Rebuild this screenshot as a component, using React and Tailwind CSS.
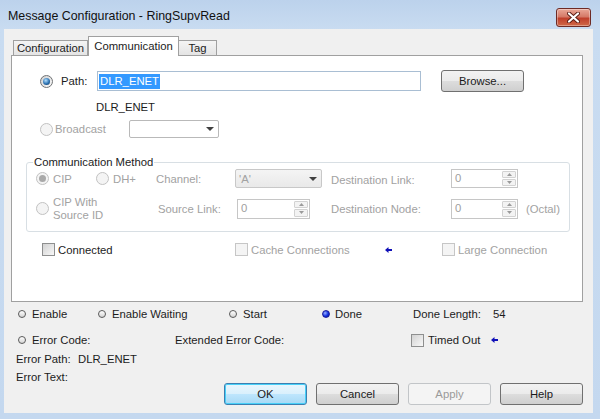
import clsx from 'clsx'

const dis = 'text-[#a2a2a2]'

function Radio({ checked, disabled }) {
  return (
    <span
      className={clsx(
        'flex h-[13px] w-[13px] shrink-0 items-center justify-center rounded-full border',
        disabled
          ? 'border-[#c2c2c2] bg-[#f4f4f4]'
          : 'border-[#707274] bg-[linear-gradient(135deg,#cfcfcf,#fbfbfb)]'
      )}
    >
      {checked && (
        <span
          className={clsx(
            'h-[7px] w-[7px] rounded-full',
            disabled
              ? 'bg-[#a9a9a9]'
              : 'bg-[radial-gradient(circle_at_40%_35%,#b3e0ff,#2c72b2_55%,#0d2f52)]'
          )}
        />
      )}
    </span>
  )
}

function Check({ disabled }) {
  return (
    <span
      className={clsx(
        'block h-[13px] w-[13px] shrink-0 border',
        disabled
          ? 'border-[#c6c6c6] bg-[#f4f4f4]'
          : 'border-[#8e8f8f] bg-[linear-gradient(135deg,#d2d2d2,#f8f8f8)]'
      )}
    />
  )
}

function Dot({ on }) {
  return (
    <span
      className={clsx(
        'block h-[8px] w-[8px] shrink-0 rounded-full border',
        on
          ? 'border-[#1a1a9a] bg-[radial-gradient(circle_at_35%_35%,#9ab0ff,#1030e0_55%,#0a1a90)]'
          : 'border-[#5a5a5a] bg-[linear-gradient(#ffffff,#d4d4d4)]'
      )}
    />
  )
}

function Arrow() {
  return (
    <svg width="7" height="6" viewBox="0 0 7 6" className="shrink-0">
      <path d="M0 3 L3.5 0 L3.5 2 L7 2 L7 4 L3.5 4 L3.5 6 Z" fill="#1010b8" />
    </svg>
  )
}

function Tri({ color = '#9a9a9a', up, big }) {
  const w = big ? 8 : 5
  const h = big ? 4 : 3
  return (
    <svg width={w} height={h} viewBox={`0 0 ${w} ${h}`}>
      <path d={up ? `M0 ${h} L${w / 2} 0 L${w} ${h} Z` : `M0 0 L${w} 0 L${w / 2} ${h} Z`} fill={color} />
    </svg>
  )
}

function Spin({ className }) {
  return (
    <div className={clsx('flex shrink-0 border border-[#c6c6c6] bg-white', className)}>
      <span className="flex-1 pl-[3px] leading-[17px] text-[#a0a0a0]">0</span>
      <div className="flex w-[16px] flex-col gap-px p-px">
        <span className="flex flex-1 items-center justify-center rounded-[1px] border border-[#d2d2d2] bg-[#f3f3f3]">
          <Tri up />
        </span>
        <span className="flex flex-1 items-center justify-center rounded-[1px] border border-[#d2d2d2] bg-[#f3f3f3]">
          <Tri />
        </span>
      </div>
    </div>
  )
}

function Btn({ children, variant }) {
  return (
    <div
      className={clsx(
        'flex h-[22px] w-[83px] items-center justify-center rounded-[3px] border',
        variant === 'default' &&
          'border-[#3c7fb1] bg-[linear-gradient(#eaf6fd,#d9f0fc_50%,#bee6fd_50%,#a7d9f5)] text-[#1a1a1a] shadow-[inset_0_0_0_1px_#48d0f8]',
        variant === 'disabled' && 'border-[#c2c5c8] bg-[#f4f4f4] text-[#9a9a9a]',
        !variant &&
          'border-[#707070] bg-[linear-gradient(#f2f2f2,#ebebeb_50%,#dddddd_50%,#cfcfcf)] text-[#1a1a1a]'
      )}
    >
      {children}
    </div>
  )
}

export default function App() {
  return (
    <div
      className="flex h-[419px] w-[600px] flex-col bg-[linear-gradient(#bcd2ec,#c9dcf1_30px,#c4d8ef)] text-[11.3px] leading-[14px] text-[#1c1c1c]"
      style={{ fontFamily: '"Liberation Sans", Arial, sans-serif' }}
    >
      {/* title bar */}
      <div className="flex h-[29px] shrink-0 items-start justify-between pl-[8px] pr-[9px]">
        <span className="mt-[9px] text-[12.4px] leading-[14px] text-[#111]">
          Message Configuration - RingSupvRead
        </span>
        <div className="mt-[8px] flex h-[19px] w-[35px] items-center justify-center rounded-[3px] border border-[#6e2b25] bg-[linear-gradient(#eaa898,#d57a68_45%,#c0402c_55%,#d06a48)] shadow-[inset_0_0_0_1px_rgba(255,255,255,0.35)]">
          <svg width="13" height="11" viewBox="0 0 13 11">
            <path d="M2 1.5 L11 9.5 M11 1.5 L2 9.5" stroke="#5a1c14" strokeWidth="4" strokeLinecap="round" />
            <path d="M2 1.5 L11 9.5 M11 1.5 L2 9.5" stroke="#ffffff" strokeWidth="2.2" strokeLinecap="round" />
          </svg>
        </div>
      </div>

      {/* body */}
      <div className="ml-[4px] mr-[7px] mb-[6px] flex flex-1 flex-col bg-[#f0f0f0] pt-[7px]">
        {/* tabs */}
        <div className="ml-[9px] flex h-[19px] items-end">
          <div className="flex h-[15px] w-[75px] items-center justify-center border border-b-0 border-[#a0a0a0] bg-[linear-gradient(#f4f4f4,#e4e4e4)]">
            Configuration
          </div>
          <div className="relative z-10 -mb-px flex h-[20px] w-[91px] items-center justify-center border border-b-0 border-[#a0a0a0] bg-white pb-[2px]">
            Communication
          </div>
          <div className="flex h-[15px] w-[38px] items-center justify-center border border-b-0 border-l-0 border-[#a0a0a0] bg-[linear-gradient(#f4f4f4,#e4e4e4)]">
            Tag
          </div>
        </div>

        {/* tab panel */}
        <div className="ml-[7px] flex h-[247px] w-[572px] flex-col border border-[#a0a0a0] bg-white">
          {/* path row */}
          <div className="mt-[14px] flex h-[22px] items-center">
            <div className="ml-[28px]">
              <Radio checked />
            </div>
            <span className="ml-[8px] w-[36px]">Path:</span>
            <div className="flex h-[20px] w-[324px] items-center border border-[#a9bed3] bg-white pl-[1px]">
              <span className="bg-[#3399ff] px-[1px] leading-[15px] text-white">DLR_ENET</span>
            </div>
            <div className="ml-[20px]">
              <Btn>Browse...</Btn>
            </div>
          </div>

          <div className="mt-[8px] ml-[84px]">DLR_ENET</div>

          {/* broadcast row */}
          <div className="mt-[6px] flex h-[18px] items-center">
            <div className="ml-[28px]">
              <Radio disabled />
            </div>
            <span className={clsx('ml-[2px] w-[74px]', dis)}>Broadcast</span>
            <div className="flex h-[18px] w-[90px] items-center justify-end rounded-[2px] border border-[#b9b9b9] bg-white pr-[4px]">
              <Tri color="#404040" big />
            </div>
          </div>

          {/* communication method group */}
          <div className="relative ml-[14px] mt-[24px] flex h-[70px] w-[544px] flex-col rounded-[3px] border border-[#d8dfe4] pl-[9px]">
            <span className="absolute -top-[8px] left-[6px] bg-white px-[1px]">Communication Method</span>

            <div className={clsx('mt-[6px] flex h-[19px] items-center', dis)}>
              <div className="flex w-[60px] items-center gap-[4px]">
                <Radio checked disabled />
                <span>CIP</span>
              </div>
              <div className="flex w-[60px] items-center gap-[4px]">
                <Radio disabled />
                <span>DH+</span>
              </div>
              <span className="w-[79px]">Channel:</span>
              <div className="flex h-[19px] w-[87px] items-center justify-between rounded-[2px] border border-[#c8c8c8] bg-[linear-gradient(#f4f4f4,#e9e9e9)] pl-[3px] pr-[4px]">
                <span>'A'</span>
                <Tri color="#404040" big />
              </div>
              <span className="ml-[9px] mt-[3px] w-[120px]">Destination Link:</span>
              <Spin className="h-[19px] w-[67px]" />
            </div>

            <div className={clsx('mt-[10px] flex h-[21px] items-center', dis)}>
              <div className="flex w-[122px] items-center gap-[4px]">
                <Radio disabled />
                <span className="leading-[13px]">
                  CIP With
                  <br />
                  Source ID
                </span>
              </div>
              <span className="w-[79px]">Source Link:</span>
              <Spin className="h-[20px] w-[73px]" />
              <span className="ml-[21px] w-[120px]">Destination Node:</span>
              <Spin className="h-[20px] w-[67px]" />
              <span className="ml-[8px]">(Octal)</span>
            </div>
          </div>

          {/* checkboxes */}
          <div className="mt-[11px] flex h-[13px] items-center">
            <div className="ml-[30px] flex w-[193px] items-center gap-[3px]">
              <Check />
              <span>Connected</span>
            </div>
            <div className={clsx('flex w-[150px] items-center gap-[3px]', dis)}>
              <Check disabled />
              <span>Cache Connections</span>
            </div>
            <Arrow />
            <div className={clsx('ml-[50px] flex items-center gap-[3px]', dis)}>
              <Check disabled />
              <span>Large Connection</span>
            </div>
          </div>
        </div>

        {/* status rows */}
        <div className="mt-[4px] flex h-[16px] items-center pl-[14px]">
          <div className="flex w-[80px] items-center gap-[6px]">
            <Dot />
            <span>Enable</span>
          </div>
          <div className="flex w-[131px] items-center gap-[6px]">
            <Dot />
            <span>Enable Waiting</span>
          </div>
          <div className="flex w-[93px] items-center gap-[6px]">
            <Dot />
            <span>Start</span>
          </div>
          <div className="flex w-[91px] items-center gap-[5px]">
            <Dot on />
            <span>Done</span>
          </div>
          <span className="w-[80px]">Done Length:</span>
          <span>54</span>
        </div>

        <div className="mt-[11px] flex h-[14px] items-center pl-[14px]">
          <div className="flex w-[157px] items-center gap-[6px]">
            <Dot />
            <span>Error Code:</span>
          </div>
          <span className="w-[236px]">Extended Error Code:</span>
          <div className="flex w-[80px] items-center gap-[4px]">
            <Check />
            <span>Timed Out</span>
          </div>
          <Arrow />
        </div>

        <div className="mt-[5px] flex h-[14px] items-center pl-[12px]">
          <span className="w-[62px]">Error Path:</span>
          <span>DLR_ENET</span>
        </div>

        <div className="mt-[4px] flex items-start pl-[12px]">
          <span className="w-[208px]">Error Text:</span>
          <div className="mt-[13px] flex gap-[9px]">
            <Btn variant="default">OK</Btn>
            <Btn>Cancel</Btn>
            <Btn variant="disabled">Apply</Btn>
            <Btn>Help</Btn>
          </div>
        </div>
      </div>
    </div>
  )
}
